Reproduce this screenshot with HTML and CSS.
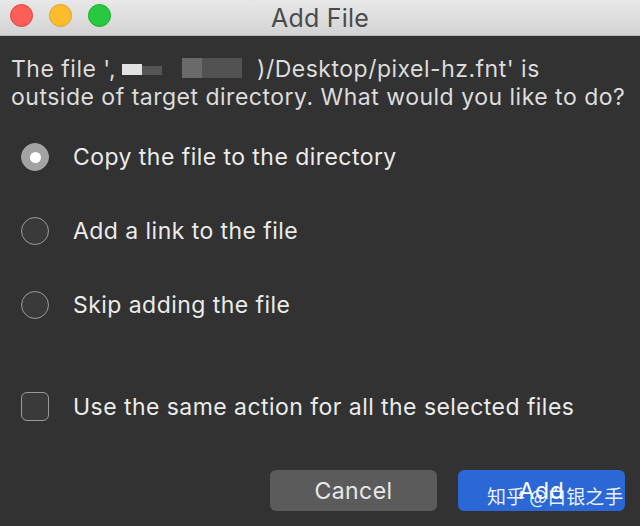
FILE: index.html
```html
<!DOCTYPE html>
<html>
<head>
<meta charset="utf-8">
<link rel="stylesheet" href="styles.css">
</head>
<body>
<div class="window">
  <div class="titlebar">
    <div class="lights">
      <span class="light red"></span>
      <span class="light yellow"></span>
      <span class="light green"></span>
    </div>
    <div class="title">Add File</div>
  </div>
  <div class="content">
    <p class="message">The file '<span class="comma">,</span><span class="blur b1"></span><span class="blur b2"></span><span class="blur b3"></span><span class="blur b4"></span><span class="blur b5"></span>)/Desktop/pixel-hz.fnt' is<br>outside of target directory. What would you like to do?</p>
    <div class="options">
      <div class="option"><span class="radio checked"><span class="dot"></span></span><span class="label">Copy the file to the directory</span></div>
      <div class="option"><span class="radio"></span><span class="label">Add a link to the file</span></div>
      <div class="option"><span class="radio"></span><span class="label">Skip adding the file</span></div>
    </div>
    <div class="option check-row"><span class="checkbox"></span><span class="label">Use the same action for all the selected files</span></div>
    <div class="buttons">
      <button class="btn cancel">Cancel</button>
      <button class="btn add">Add<span class="watermark">知乎 @白银之手</span></button>
    </div>
  </div>
</div>
</body>
</html>
```

FILE: styles.css
```css
html, body {
  margin: 0;
  padding: 0;
  background: #323232;
}
body {
  width: 640px;
  height: 526px;
  overflow: hidden;
  font-family: Inter, "Liberation Sans", "Noto Sans CJK SC", sans-serif;
}
.window {
  width: 640px;
  height: 526px;
  display: flex;
  flex-direction: column;
}
.titlebar {
  height: 35px;
  flex: none;
  background: linear-gradient(#e8e8e8, #d3d3d3);
  border-bottom: 1px solid #b8b8b8;
  position: relative;
  display: flex;
  align-items: center;
  justify-content: center;
}
.lights {
  position: absolute;
  left: 10px;
  top: 4px;
  display: flex;
  gap: 16px;
}
.light {
  width: 23px;
  height: 23px;
  border-radius: 50%;
  box-sizing: border-box;
}
.red { background: #fc5f57; border: 1px solid #e0443e; }
.yellow { background: #fdbc2e; border: 1px solid #dea123; }
.green { background: #28c840; border: 1px solid #1aab29; }
.title {
  font-size: 25px;
  color: #4a4a4a;
  padding-top: 1px;
  letter-spacing: 0.2px;
}
.content {
  flex: 1;
  background: #323232;
  padding: 0 0 0 11px;
}
.message {
  margin: 19px 0 0 0;
  font-size: 23px;
  line-height: 28px;
  letter-spacing: 0.5px;
  color: #dcdcdc;
  white-space: nowrap;
}
.comma { margin-right: 6px; }
.blur {
  display: inline-block;
  vertical-align: middle;
}
.b1 { width: 20px; height: 11px; background: #e2e2e2; position: relative; top: -1px; }
.b2 { width: 20px; height: 9px; background: #565656; margin-right: 20px; }
.b3 { width: 20px; height: 20px; background: #6a6a6a; position: relative; top: -3px; }
.b4 { width: 40px; height: 20px; background: #525252; position: relative; top: -3px; }
.b5 { width: 15px; height: 20px; background: transparent; }
.options {
  margin-top: 32px;
  display: flex;
  flex-direction: column;
  gap: 46px;
}
.option {
  display: flex;
  align-items: center;
  height: 28px;
}
.radio {
  width: 28px;
  height: 28px;
  border-radius: 50%;
  box-sizing: border-box;
  border: 1px solid #9a9a9a;
  background: #3a3a3a;
  margin-left: 10px;
  margin-right: 24px;
  display: flex;
  align-items: center;
  justify-content: center;
  flex: none;
}
.radio.checked {
  background: #a3a3a3;
  border-color: #a3a3a3;
}
.dot {
  width: 11px;
  height: 11px;
  border-radius: 50%;
  background: #fff;
}
.label {
  font-size: 23px;
  letter-spacing: 0.45px;
  color: #ebebeb;
}
.check-row {
  margin-top: 73px;
  height: 29px;
}
.checkbox {
  width: 28px;
  height: 29px;
  box-sizing: border-box;
  border: 1px solid #9a9a9a;
  border-radius: 6px;
  background: #3a3a3a;
  margin-left: 10px;
  margin-right: 24px;
  flex: none;
}
.buttons {
  margin-top: 49px;
  display: flex;
  justify-content: flex-end;
  gap: 21px;
  padding-right: 15px;
}
.btn {
  width: 167px;
  height: 41px;
  border: none;
  border-radius: 6px;
  font-family: Inter, "Liberation Sans", sans-serif;
  font-size: 23px;
  letter-spacing: 0.45px;
  color: #e8e8e8;
  position: relative;
  padding: 0;
}
.cancel { background: #5b5b5b; }
.add { background: #2c67d6; color: #fff; }
.watermark {
  position: absolute;
  left: 29px;
  top: 12px;
  font-family: "Noto Sans CJK SC", sans-serif;
  font-size: 19px;
  letter-spacing: 0;
  color: rgba(255,255,255,0.92);
  white-space: nowrap;
}
```
